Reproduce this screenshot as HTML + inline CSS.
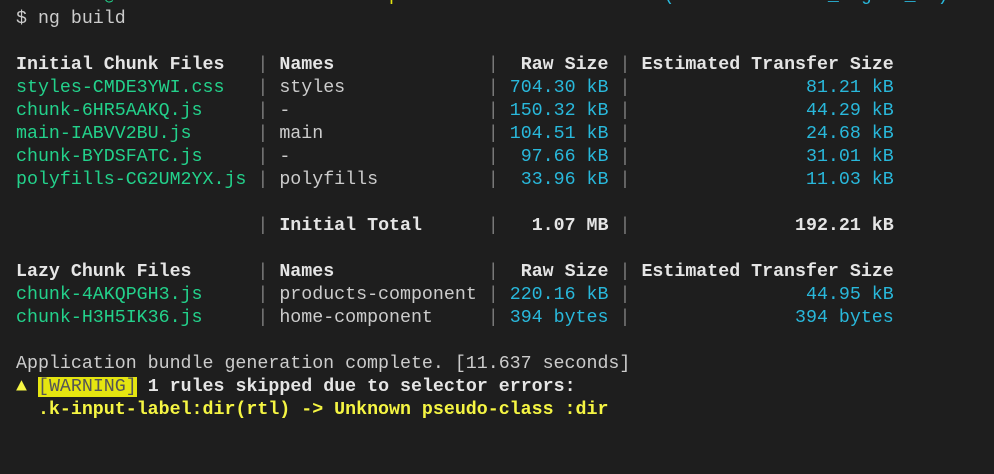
<!DOCTYPE html>
<html><head><meta charset="utf-8"><style>
html,body{margin:0;padding:0;background:#1e1e1e;width:994px;height:474px;overflow:hidden}
pre{margin:0;position:absolute;left:16px;top:-15px;font-family:"Liberation Mono","DejaVu Sans Mono",monospace;font-size:18.3px;line-height:23px;color:#cccccc;letter-spacing:0}
.g{color:#23d18b}.c{color:#29b8db}.p{color:#7a7a7a}.b{font-weight:bold;color:#e5e5e5}
.m{color:#d670d6}.y{color:#e5e510}.yb{color:#f5f543;font-weight:bold}
.w{background:#e5e510;color:#555;}
</style></head><body><pre><span class="g">DFAKEDES@IRNO-DCH</span> <span class="m">MINGW64</span> <span class="y">~/Desktop/lab/modules-with-kendo</span> <span class="c">(feature/filter_signal_fx)</span>
$ ng build

<span class="b">Initial Chunk Files</span>   <span class="p">|</span> <span class="b">Names</span>              <span class="p">|</span>  <span class="b">Raw Size</span> <span class="p">|</span> <span class="b">Estimated Transfer Size</span>
<span class="g">styles-CMDE3YWI.css</span>   <span class="p">|</span> styles             <span class="p">|</span> <span class="c">704.30 kB</span> <span class="p">|</span>                <span class="c">81.21 kB</span>
<span class="g">chunk-6HR5AAKQ.js</span>     <span class="p">|</span> -                  <span class="p">|</span> <span class="c">150.32 kB</span> <span class="p">|</span>                <span class="c">44.29 kB</span>
<span class="g">main-IABVV2BU.js</span>      <span class="p">|</span> main               <span class="p">|</span> <span class="c">104.51 kB</span> <span class="p">|</span>                <span class="c">24.68 kB</span>
<span class="g">chunk-BYDSFATC.js</span>     <span class="p">|</span> -                  <span class="p">|</span>  <span class="c">97.66 kB</span> <span class="p">|</span>                <span class="c">31.01 kB</span>
<span class="g">polyfills-CG2UM2YX.js</span> <span class="p">|</span> polyfills          <span class="p">|</span>  <span class="c">33.96 kB</span> <span class="p">|</span>                <span class="c">11.03 kB</span>

                      <span class="p">|</span> <span class="b">Initial Total</span>      <span class="p">|</span>   <span class="b">1.07 MB</span> <span class="p">|</span>               <span class="b">192.21 kB</span>

<span class="b">Lazy Chunk Files</span>      <span class="p">|</span> <span class="b">Names</span>              <span class="p">|</span>  <span class="b">Raw Size</span> <span class="p">|</span> <span class="b">Estimated Transfer Size</span>
<span class="g">chunk-4AKQPGH3.js</span>     <span class="p">|</span> products-component <span class="p">|</span> <span class="c">220.16 kB</span> <span class="p">|</span>                <span class="c">44.95 kB</span>
<span class="g">chunk-H3H5IK36.js</span>     <span class="p">|</span> home-component     <span class="p">|</span> <span class="c">394 bytes</span> <span class="p">|</span>               <span class="c">394 bytes</span>

Application bundle generation complete. [11.637 seconds]
<span class="yb">▲</span> <span class="w">[WARNING]</span> <span class="b">1 rules skipped due to selector errors:</span>
  <span class="yb">.k-input-label:dir(rtl) -&gt; Unknown pseudo-class :dir</span>
</pre></body></html>
